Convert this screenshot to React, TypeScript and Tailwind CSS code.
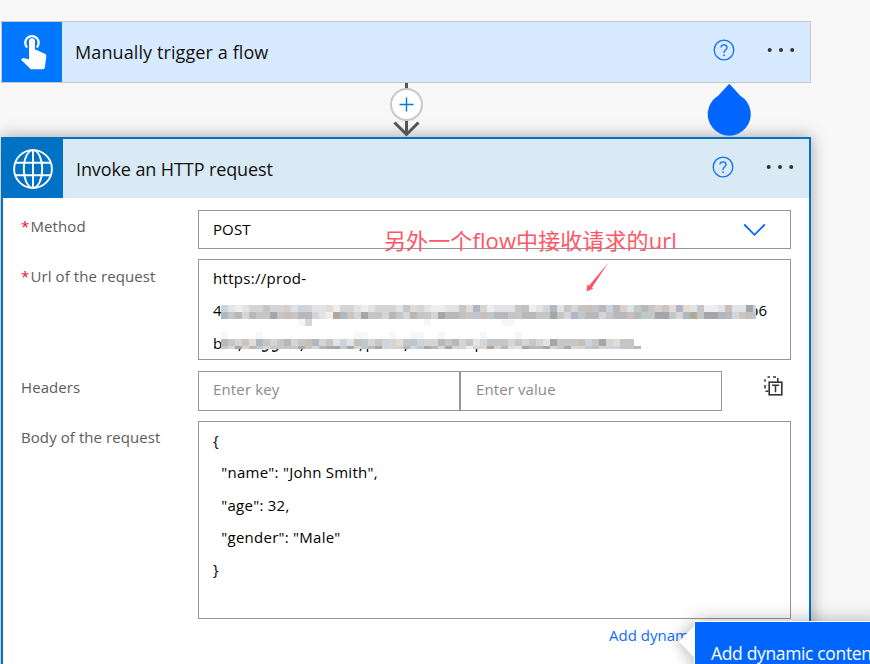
import React from "react";

const TONES: Record<string, string> = {
  a: "#e2e3e5",
  b: "#d5d5d5",
  c: "#c6c6c7",
  d: "#b8b8ba",
  e: "#a6a5a8",
  f: "#ccd3de",
  g: "#b0b7c4",
  h: "#c6bfba",
  i: "#e3dbd4",
  j: "#d9cece",
  k: "#dae3e2",
  l: "#eeeeee",
  m: "#bdc7ce",
  n: "#b3a79c",
  w: "#ffffff",
  v: "#f7f7f7",
};

function Mosaic({ rows, heights }: { rows: string[]; heights: number[] }) {
  const tops = heights.map((_, i) => heights.slice(0, i).reduce((s, h) => s + h, 0));
  const total = heights.reduce((s, h) => s + h, 0);
  return (
    <svg width={535} height={total} className="block">
      {rows.map((row, r) =>
        row.split("").map((t, c) =>
          t === "w" ? null : (
            <rect key={`${r}-${c}`} x={c * 7} y={tops[r]} width={7} height={heights[r]} fill={TONES[t]} />
          ),
        ),
      )}
    </svg>
  );
}

const LINE_ONE = [
  "falabbcbbjkfbaailbbalabbbaciballaacigblaaachlabgacbchcdfdjkcdcjcigiacllahaaef",
  "gcdbdccechcddbalngcbeccbdcbdccbeddhcmhmddccddccecbgcddbcddhdmceecbgnceegdbchcbm",
  "wwwwwwwwwwwvbwwwwwwwwwwwwwwwwvwwwwwwwwwwvvwwwwwwwwwww",
];

const LINE_TWO = [
  "vwwwwvwwwwwwwwwwwwwvvwwwvwwvvwwvwwwwwvwwwwv",
  "dcbcigcbcdbchgbcafahmbcfbicmfbbdcdbcabmccbcbcbaeccchfcebimc",
  "cbebdmbccccnmbgnecebmdebbfgbmndbebblbbnbdiaeddebcnbbchbffccd",
];

function HelpIcon() {
  return (
    <svg width="22" height="22" viewBox="0 0 22 22" fill="none" stroke="#0f6cff" strokeWidth="1.3">
      <circle cx="11" cy="11" r="9.8" />
      <path d="M8 8.6C8 6.8 9.2 5.8 11 5.8s3 1.1 3 2.7c0 2.4-3 2.6-3 5v.6" />
      <path d="M11 15.4v1.6" strokeWidth="1.6" />
    </svg>
  );
}

function MoreIcon() {
  return (
    <svg width="28" height="6" viewBox="0 0 28 6" fill="#333">
      <circle cx="2.7" cy="3" r="2" />
      <circle cx="14" cy="3" r="2" />
      <circle cx="25.2" cy="3" r="2" />
    </svg>
  );
}

function TapIcon() {
  return (
    <svg width="28" height="38" viewBox="0 0 28 38" fill="white">
      <path d="M7.2 14.5A6.7 6.7 0 1 1 16.7 14.5" fill="none" stroke="white" strokeWidth="2.3" />
      <path d="M9 8.2a3 3 0 0 1 6 0v8.6l1.6.2 8.3 3.7c1 .5 1.5 1.3 1.4 2.4l-1.4 11.2c-.2 1.3-1 2-2.3 2H12c-.8 0-1.5-.3-2-.9L1 26.8l1-1.1c.6-.5 1.2-.7 2-.5l5 1.1z" />
    </svg>
  );
}

function GlobeIcon() {
  return (
    <svg width="42" height="42" viewBox="0 0 42 42" fill="none" stroke="white" strokeWidth="1.9">
      <circle cx="21" cy="21" r="18.9" />
      <ellipse cx="21" cy="21" rx="9.2" ry="18.9" />
      <path d="M21 2v38M3.5 14.8h35M3.5 27.2h35" />
    </svg>
  );
}

function ModeIcon() {
  return (
    <svg width="19" height="20" viewBox="0 0 19 20" fill="none" stroke="#333" strokeWidth="1.5">
      <path d="M3.5 1H6M9 1h3M13.8 2v4M1 3.2v2.6M1 9v3.5M1.5 15.2h3" />
      <rect x="5.2" y="6.2" width="12.6" height="12.6" strokeWidth="1.6" />
      <path d="M8 9.3h7M11.5 9.3v7" strokeWidth="1.5" />
    </svg>
  );
}

function Label({ text, required }: { text: string; required?: boolean }) {
  return (
    <div className="flex w-[177px] shrink-0 pt-[6px] text-[15px] leading-5 tracking-[0.08px] whitespace-pre text-[#5c5c5c]">
      {required && <span className="w-[9.5px] text-[#e8112d]">*</span>}
      <span>{text}</span>
    </div>
  );
}

export default function App() {
  return (
    <div className="relative h-[664px] w-[870px] overflow-hidden bg-[#f8f8f8] pt-[21px] pl-px font-['Open_Sans','Noto_Sans_CJK_SC',sans-serif]">
      <div className="flex h-[62px] w-[810px] items-center border border-[#c8c8c8] bg-[#d8eaff]">
        <div className="flex h-[60px] w-[60px] items-center justify-center bg-[#0077ff] pl-1">
          <TapIcon />
        </div>
        <span className="ml-[13px] flex-1 text-[18px] tracking-[0.1px] text-[#111]">Manually trigger a flow</span>
        <div className="mr-[15px] flex items-center gap-[32px] pb-[4px]">
          <HelpIcon />
          <MoreIcon />
        </div>
      </div>

      <div className="relative h-[54px] w-[810px]">
        <svg width="36" height="54" viewBox="0 0 36 54" className="mx-auto block" fill="none">
          <path d="M18.5 0v52M6.5 39.5l12 12 12-12" stroke="#555" strokeWidth="3" />
          <circle cx="18.5" cy="21.5" r="15.5" fill="white" stroke="#c8c8c8" strokeWidth="2" />
          <path d="M11.5 21.5h14M18.5 14.5v14" stroke="#0078d7" strokeWidth="1.4" />
        </svg>
        <svg width="44" height="54" viewBox="0 0 44 54" className="absolute top-0 left-[706px]" fill="#0066ff">
          <path d="M22.300 .8L33.3 12.7A21.5 21.5 0 1 1 11.2 12.7z" />
        </svg>
      </div>

      <div className="h-[600px] w-[810px] border-2 border-[#0072c6] bg-white shadow-[0_0_16px_rgba(0,0,0,0.35)]">
        <div className="flex h-[59px] items-center bg-[#d9eaf5]">
          <div className="flex h-[59px] w-[60px] items-center justify-center bg-[#0072c6]">
            <GlobeIcon />
          </div>
          <span className="ml-[13px] flex-1 pt-[2px] text-[18px] tracking-[-0.1px] text-[#111]">Invoke an HTTP request</span>
          <div className="mr-[15px] flex items-center gap-[32px] pb-[3px]">
            <HelpIcon />
            <MoreIcon />
          </div>
        </div>

        <div className="flex flex-col gap-[10px] pt-3 pl-[18px] text-[15px] text-black">
          <div className="flex">
            <Label text="Method" required />
            <div className="flex h-[39px] w-[593px] items-center justify-between border border-[#969696] pr-[24px] pl-[14px]">
              <span className="tracking-[0.1px]">POST</span>
              <svg width="23" height="14" viewBox="0 0 23 14" fill="none" stroke="#0066ff" strokeWidth="1.8">
                <path d="M1.2 1.5l10.3 10.3L21.8 1.5" />
              </svg>
            </div>
          </div>

          <div className="flex">
            <div className="pt-px">
              <Label text="Url of the request" required />
            </div>
            <div className="relative h-[101px] w-[593px] border border-[#969696] pt-[2px] pl-[14px] leading-[32.3px]">
              <div className="tracking-[0.3px]">https://prod-</div>
              <div className="flex justify-between pr-[23px]">
                <span>4</span>
                <span>b6</span>
              </div>
              <div>b</div>
              <div className="absolute top-[44.5px] left-[22px]">
                <Mosaic rows={LINE_ONE} heights={[7, 7, 7]} />
              </div>
              <div className="absolute top-[72px] left-[22px]">
                <Mosaic rows={LINE_TWO} heights={[7, 7, 3]} />
              </div>
              <svg width="270" height="5" viewBox="0 0 270 5" className="absolute top-[89px] left-[38px]" fill="none" stroke="#222" strokeWidth="1.5">
                <path d="M3 0l-1 2M25 1.5q4 2 6-1.5M35 1.5q4 2 6-1.5M65 0l-1 2M124 0l-1 2M130.500 0v3M169 0l-1 2M239.500 0v3" />
              </svg>
            </div>
          </div>

          <div className="mt-px flex">
            <Label text="Headers" />
            <div className="flex h-[40px] w-[262px] items-center border border-[#969696] pb-[4px] pl-[14px] tracking-[0.15px] text-[#8a8a8a]">Enter key</div>
            <div className="flex h-[40px] w-[262px] items-center border border-[#969696] pb-[4px] pl-[15px] tracking-[0.1px] text-[#8a8a8a]">Enter value</div>
            <div className="mt-[5px] ml-[42px]">
              <ModeIcon />
            </div>
          </div>

          <div className="flex">
            <Label text="Body of the request" />
            <div className="h-[198px] w-[593px] border border-[#969696] pt-[2px] pl-[14px] leading-[32.3px] tracking-[0.25px] whitespace-pre">
              {'{\n  "name": "John Smith",\n  "age": 32,\n  "gender": "Male"\n}'}
            </div>
          </div>
        </div>
        <div className="mt-[6px] ml-[606px] text-[15px] leading-5 text-[#0f6cff]">Add dynamic content</div>
      </div>

      <div className="absolute top-[224px] left-[384px] text-[22px] leading-8 tracking-[0.1px] whitespace-nowrap text-[#ff5566]">另外一个flow中接收请求的url</div>
      <svg width="26" height="32" viewBox="0 0 26 32" className="absolute top-[262px] left-[584px]" fill="#ff5566">
        <path d="M24.500 .5L8 25.500l1.200 1.200L2.500 29.500l.8-7 1.600 1.200z" />
      </svg>

      <div className="absolute top-[621px] left-[694px] h-[60px] w-[190px] shadow-[0_0_18px_rgba(0,0,0,0.3)]" />
      <svg width="18" height="46" viewBox="0 0 18 46" className="absolute top-[618px] left-[678px] drop-shadow-[-3px_0_6px_rgba(0,0,0,0.2)]" fill="white">
        <path d="M17 7L1 23.500l16 17z" />
      </svg>
      <div className="absolute top-[621px] left-[694px] h-[60px] w-[190px] border border-white bg-[#0066ff] pt-[19px] pl-4 text-[17.5px] leading-6 tracking-[-0.35px] whitespace-nowrap text-white">
        Add dynamic content
      </div>
    </div>
  );
}
